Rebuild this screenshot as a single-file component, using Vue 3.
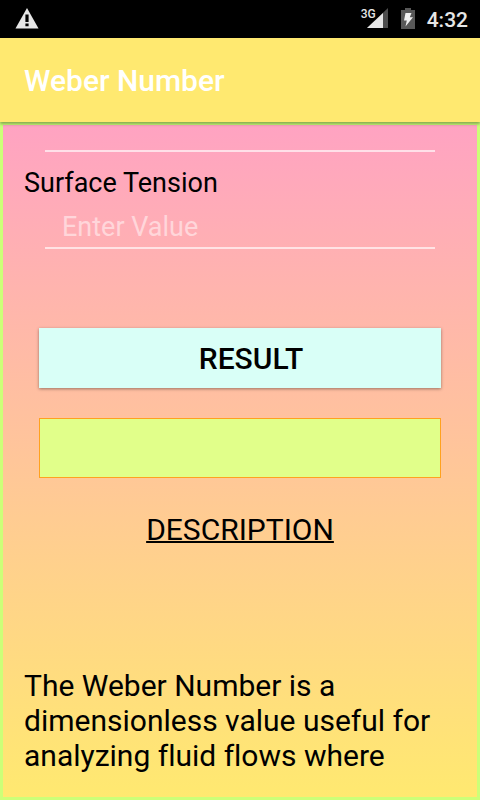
<template>
  <div class="screen">
    <div class="status-bar">
      <svg class="warning" width="24" height="22" viewBox="0 0 24 22">
        <path d="M12 0 L23.5 20.5 H0.5 Z" fill="#e6e6e6" />
        <path d="M10.4 6.5h3.2v7.5h-3.2z M10.4 15.5h3.2v2.7h-3.2z" fill="#000" />
      </svg>
      <div class="status-icons">
        <div class="network">
          <svg width="22" height="22" viewBox="0 0 22 22">
            <path d="M22 0 V20 H1 Z" fill="#4d4d4d" />
            <path d="M17 5 V20 H1 Z" fill="#e6e6e6" />
          </svg>
          <span class="network-type">3G</span>
        </div>
        <svg class="battery" width="14" height="22" viewBox="0 0 14 22">
          <path d="M4 0h6v2h4v19H0V2h4z" fill="#585858" />
          <path d="M4.5 5h6L8.8 9.2H12L4.5 18.5l1.3-6H3z" fill="#f0f0f0" />
        </svg>
        <span class="clock">4:32</span>
      </div>
    </div>

    <header class="app-bar">
      <h1>Weber Number</h1>
    </header>

    <main class="content">
      <input v-model="length" class="value-input scrolled" type="text" aria-label="Length" />
      <label class="field-label" for="tension">Surface Tension</label>
      <input id="tension" v-model="tension" class="value-input" type="text" placeholder="Enter Value" />

      <button class="result-button" type="button" @click="calculate">RESULT</button>
      <output class="result-box">{{ result }}</output>

      <h2 class="description-title">DESCRIPTION</h2>
      <p class="description">
        The Weber Number is a dimensionless value useful for analyzing fluid flows where
      </p>
    </main>
  </div>
</template>

<script setup>
import { ref } from 'vue';

const density = ref(1);
const velocity = ref(1);
const length = ref('');
const tension = ref('');
const result = ref('');

// We = density * velocity^2 * length / surface tension
const calculate = () => {
  const l = parseFloat(length.value);
  const t = parseFloat(tension.value);
  if (!l || !t) {
    result.value = '';
    return;
  }
  result.value = (density.value * velocity.value ** 2 * l) / t;
};
</script>

<style>
body {
  margin: 0;
}
</style>

<style scoped>
.screen {
  min-height: 100vh;
  display: flex;
  flex-direction: column;
  background: #ffe970;
  font-family: Roboto, 'Liberation Sans', sans-serif;
  font-variant-ligatures: none;
  color: #000;
}

.status-bar {
  height: 38px;
  padding: 0 12px 0 15px;
  display: flex;
  align-items: center;
  justify-content: space-between;
  background: #000;
}

.status-icons {
  display: flex;
  align-items: center;
  gap: 13px;
}

.network {
  position: relative;
  display: flex;
}

.network-type {
  position: absolute;
  top: 0;
  left: -5px;
  color: #e6e6e6;
  font-size: 12px;
  line-height: 12px;
  font-weight: 500;
}

.clock {
  margin-left: -1px;
  padding-top: 2px;
  color: #e6e6e6;
  font-size: 21px;
  line-height: 26px;
  font-weight: 500;
}

.app-bar {
  height: 84px;
  padding: 2px 24px 0;
  box-sizing: border-box;
  display: flex;
  align-items: center;
  position: relative;
  background: #ffe970;
  box-shadow: 0 2px 3px rgba(0, 0, 0, 0.35);
}

h1 {
  margin: 0;
  color: #fff;
  font-size: 30px;
  line-height: 36px;
  font-weight: 500;
}

.content {
  flex: 1;
  display: flex;
  flex-direction: column;
  padding: 0 21px;
  border: 3px solid #ccff78;
  background: linear-gradient(#ffa3c2, #ffe970) padding-box;
}

.value-input {
  height: 49px;
  box-sizing: border-box;
  margin: 0 21px;
  padding: 7px 17px 0;
  border: none;
  border-bottom: 2px solid rgba(255, 255, 255, 0.65);
  border-radius: 0;
  outline: none;
  background: transparent;
  color: #000;
  font-family: inherit;
  font-size: 27px;
}

.value-input.scrolled {
  height: 27px;
}

.value-input::placeholder {
  color: rgba(255, 255, 255, 0.5);
  opacity: 1;
}

.field-label {
  margin-top: 14px;
  font-size: 27px;
  line-height: 34px;
}

.result-button {
  height: 60px;
  margin: 79px 15px 0;
  padding: 0 0 0 22px;
  border: none;
  border-radius: 0;
  background: #d9fff7;
  box-shadow: 0 1px 3px rgba(0, 0, 0, 0.4);
  color: #000;
  font-family: inherit;
  font-size: 30px;
  font-weight: 500;
}

.result-box {
  height: 60px;
  margin: 30px 15px 0;
  box-sizing: border-box;
  border: 1px solid #ffa11f;
  background: #e1ff8a;
  font-size: 30px;
  line-height: 58px;
  text-align: center;
}

.description-title {
  margin: 34px 0 0;
  font-size: 30px;
  line-height: 35px;
  font-weight: 400;
  text-align: center;
  text-decoration: underline;
  text-decoration-thickness: 2px;
}

.description {
  margin: 121px 0 23px;
  font-size: 30px;
  line-height: 35px;
}
</style>
